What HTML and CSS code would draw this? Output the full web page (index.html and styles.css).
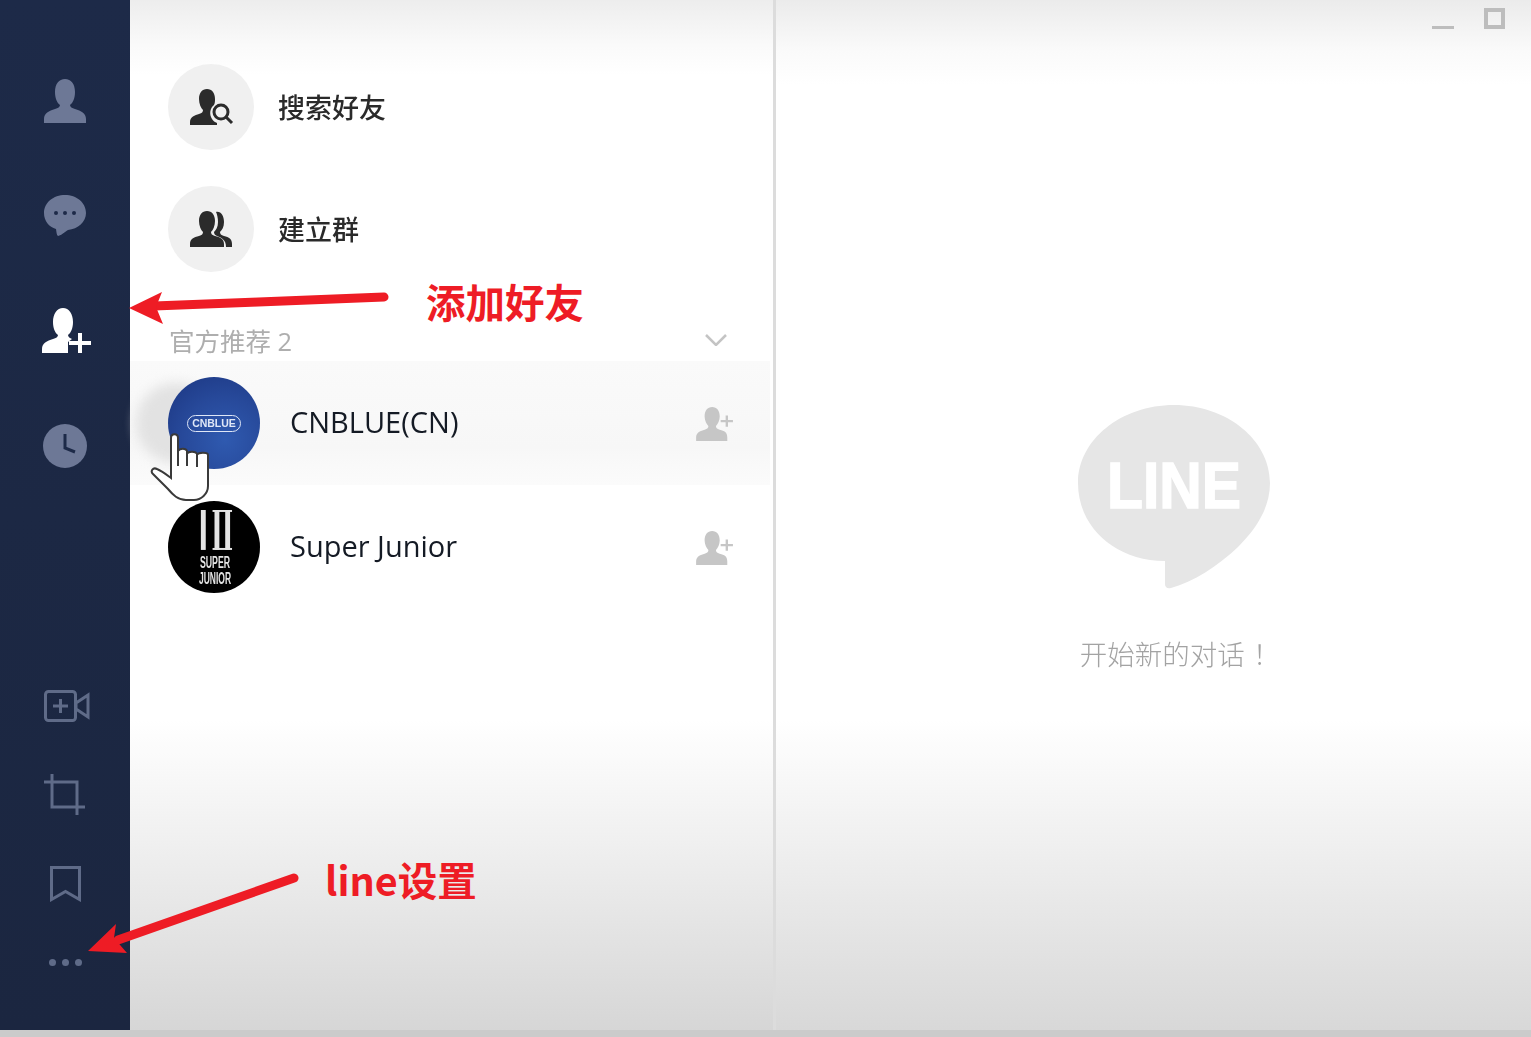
FILE: index.html
```html
<!DOCTYPE html>
<html lang="zh-CN">
<head>
<meta charset="utf-8">
<title>LINE</title>
<link rel="stylesheet" href="styles.css">
</head>
<body>
<svg class="defs" width="0" height="0" aria-hidden="true">
  <symbol id="person" viewBox="0 0 42 44">
    <path d="M0 44v-4c0-6 5-8 11-10 3-1 5-2 5-4-3-2-5-7-5-13C11 5 15 0 21 0s10 5 10 13c0 6-2 11-5 13 0 2 2 3 5 4 6 2 11 4 11 10v4z"/>
  </symbol>
</svg>
<div class="app">
  <nav class="sidebar">
    <div class="nav-top">
      <div class="nav-item"><svg class="ic-person"><use href="#person"/></svg></div>
      <div class="nav-item">
        <svg class="ic-chat" viewBox="0 0 42 42"><path d="M21 0C9.500 0 0 7.500 0 18c0 8 5 14 12 16 .5 3 .5 6 2 7 2 0 7-4 10-6 10-1 18-8 18-17C42 7.500 32.500 0 21 0z"/><circle cx="12" cy="18" r="2" class="dot"/><circle cx="21" cy="18" r="2" class="dot"/><circle cx="30" cy="18" r="2" class="dot"/></svg>
      </div>
      <div class="nav-item active">
        <svg class="ic-add" viewBox="0 0 50 46"><path d="M0 45v-4c0-6 5-8 11-10 3-1 5-2 5-4-3-2-5-7-5-13C11 6 15 0 21 0s10 6 10 14c0 6-2 11-5 13 0 2 2 3 4 4l-4 3v11z"/><path d="M27 35h22M38 25v20" class="plus"/></svg>
      </div>
      <div class="nav-item">
        <svg class="ic-clock" viewBox="0 0 44 44"><circle cx="22" cy="22" r="22"/><path d="M22 10v14l10 4" class="hand-line"/></svg>
      </div>
    </div>
    <div class="nav-bottom">
      <div class="nav-item small">
        <svg class="ic-outline ic-video" viewBox="0 0 46 32"><rect x="1.500" y="1.500" width="30" height="29" rx="3"/><path d="M9 16h15M16.500 9v14M32 13l12-8v22l-12-8z"/></svg>
      </div>
      <div class="nav-item small">
        <svg class="ic-outline ic-crop" viewBox="0 0 42 42"><path d="M8 0v33h33M0 8h33v33"/></svg>
      </div>
      <div class="nav-item small">
        <svg class="ic-outline ic-mark" viewBox="0 0 31 36"><path d="M1.500 1.500h28v32l-14-8-14 8z"/></svg>
      </div>
      <div class="nav-item tiny"><span class="dots"><i></i><i></i><i></i></span></div>
    </div>
  </nav>

  <section class="list">
    <div class="action">
      <span class="action-circle">
        <svg class="ic-search" viewBox="0 0 44 36"><path d="M0 36v-3c0-5 5-7 9-8 3-1 4-2 4-4-2-2-4-6-4-11C9 4 12 0 17 0s8 4 8 10c0 2 0 4-1 6-4 3-5 9-2 14 1 2 3 3 5 4v2z"/><circle cx="31" cy="23" r="7" class="lens"/><path d="M36 28l6 6" class="lens"/></svg>
      </span>
      <span class="action-label">搜索好友</span>
    </div>
    <div class="action">
      <span class="action-circle">
        <svg class="ic-group" viewBox="0 0 42 36"><path d="M26 1c5-1 8 4 8 10 0 5-2 8-4 10 0 2 1 3 4 4 5 1 8 3 8 8v3h-6c0-7-4-9-9-11-2-1-3-2-3-4 2-2 4-5 4-10 0-4-1-8-2-10z"/><path d="M0 36v-3c0-5 4-7 9-8 3-1 4-2 4-4-2-2-4-6-4-11C9 4 12 0 17 0s8 4 8 10c0 5-2 9-4 11 0 2 1 3 4 4 5 1 9 3 9 8v3z"/></svg>
      </span>
      <span class="action-label">建立群</span>
    </div>

    <div class="section-head">
      <span>官方推荐 2</span>
      <svg class="ic-chevron" viewBox="0 0 22 12"><path d="M1 1l10 10L21 1"/></svg>
    </div>

    <div class="row hover">
      <span class="ripple"></span>
      <span class="avatar avatar-blue"><span class="cn-pill">CNBLUE</span></span>
      <span class="row-name">CNBLUE(CN)</span>
      <svg class="ic-rowadd" viewBox="0 0 40 36"><path d="M0 36v-4c0-5 5-7 9-8 3-1 4-2 4-4-2-2-4-6-4-10C9 4 12 0 17 0s8 4 8 10c0 4-2 8-4 10 0 2 1 3 4 4 5 1 8 3 8 8v4z"/><path d="M26 15h13M32.500 9v12" class="plus"/></svg>
    </div>
    <div class="row">
      <span class="avatar avatar-black">
        <svg class="sj-logo" viewBox="0 0 40 76">
          <rect x="6" y="0" width="5" height="41"/><rect x="20" y="0" width="5" height="41"/><rect x="31" y="0" width="5" height="41"/><rect x="18" y="0" width="20" height="2"/><rect x="18" y="39" width="20" height="2"/>
          <text x="20.500" y="60" text-anchor="middle" textLength="31" lengthAdjust="spacingAndGlyphs">SUPER</text>
          <text x="20.500" y="76" text-anchor="middle" textLength="33" lengthAdjust="spacingAndGlyphs">JUNIOR</text>
        </svg>
      </span>
      <span class="row-name">Super Junior</span>
      <svg class="ic-rowadd" viewBox="0 0 40 36"><path d="M0 36v-4c0-5 5-7 9-8 3-1 4-2 4-4-2-2-4-6-4-10C9 4 12 0 17 0s8 4 8 10c0 4-2 8-4 10 0 2 1 3 4 4 5 1 8 3 8 8v4z"/><path d="M26 15h13M32.500 9v12" class="plus"/></svg>
    </div>
  </section>

  <main class="chat">
    <div class="win-controls">
      <span class="win-min"></span>
      <span class="win-max"></span>
    </div>
    <div class="empty">
      <svg class="line-logo" viewBox="0 0 192 184">
        <path d="M96 0c53 0 96 35 96 78 0 25-14 46-32 64-20 19-45 35-67 41-4 1-6-1-6-4v-23C37 156 0 122 0 78 0 35 43 0 96 0z"/>
        <text x="96" y="103" text-anchor="middle" textLength="134" lengthAdjust="spacingAndGlyphs">LINE</text>
      </svg>
      <p class="empty-text">开始新的对话<span class="bang">！</span></p>
    </div>
  </main>
</div>
<div class="strip"></div>

<svg class="hand" viewBox="0 0 60 72">
  <path d="M21 8c0-5 7-5 7 0v13c2-3 8-3 9 0v3c1-3 9-3 10 0v1c1-3 11-3 11 0v31c0 8-7 14-14 14H36c-8 0-13-5-18-11L3 44c-3-3 0-7 4-5 5 2 10 6 14 9zM37 24v12M47 25v12M28 21v15"/>
</svg>
<svg class="arrow arrow-one" viewBox="0 0 262 36">
  <path d="M255 6L25 15" class="shaft"/>
  <path d="M0 17L33 1l-6 15 7 17z" class="head"/>
</svg>
<svg class="arrow arrow-two" viewBox="0 0 214 84">
  <path d="M206 6L30 68" class="shaft"/>
  <path d="M0 79L28 52l-2 14 13 15z" class="head"/>
</svg>
<div class="note note-one">添加好友</div>
<div class="note note-two">line设置</div>
</body>
</html>
```

FILE: styles.css
```css
* { box-sizing: border-box; }
html, body { margin: 0; padding: 0; }
body {
  width: 1531px;
  height: 1037px;
  overflow: hidden;
  position: relative;
  background: #c8c8c8;
  font-family: "Open Sans", "Noto Sans CJK SC", sans-serif;
}
.defs { position: absolute; }
.app { display: flex; height: 1030px; filter: blur(.5px); }
.strip { height: 7px; background: #cbcbcb; }

/* sidebar */
.sidebar {
  width: 130px;
  flex: none;
  display: flex;
  flex-direction: column;
  justify-content: space-between;
  background: linear-gradient(#1d2a48, #1b2640);
  padding: 43px 0 33px;
  fill: #6d7896;
}
.nav-item { height: 115px; display: flex; align-items: center; justify-content: center; }
.nav-item.small { height: 89px; }
.nav-item.tiny { height: 69px; }
.nav-item.active { fill: #fff; }
.ic-person { width: 42px; height: 44px; }
.ic-chat { width: 42px; height: 42px; }
.ic-chat .dot { fill: #1d2a48; }
.ic-add { width: 50px; height: 46px; margin-left: 3px; }
.ic-add .plus { fill: none; stroke: #fff; stroke-width: 4; }
.ic-clock { width: 44px; height: 44px; }
.hand-line { fill: none; stroke: #1d2a48; stroke-width: 3; }
.ic-outline { fill: none; stroke: #5f6b88; stroke-width: 3; }
.ic-video { width: 46px; height: 32px; margin-left: 3px; }
.ic-crop { width: 42px; height: 42px; }
.ic-mark { width: 31px; height: 36px; }
.dots { display: flex; gap: 6px; }
.dots i { width: 7px; height: 7px; border-radius: 50%; background: #5f6b88; }

/* list panel */
.list {
  width: 643px;
  flex: none;
  padding: 46px 3px 0 0;
  background: linear-gradient(#ededed 0, #fafafa 45px, #fff 75px, #fff 720px, #f0f0f0 840px, #d6d6d6 1030px);
}
.action { height: 122px; padding-left: 38px; display: flex; align-items: center; gap: 24px; }
.action-circle {
  width: 86px;
  height: 86px;
  border-radius: 50%;
  background: #f0f0f0;
  display: flex;
  align-items: center;
  justify-content: center;
  fill: #2b2b2b;
}
.ic-search { width: 44px; height: 36px; margin-left: 2px; }
.ic-group { width: 42px; height: 36px; }
.lens { fill: none; stroke: #2b2b2b; stroke-width: 3; }
.action-label { font-size: 27px; font-weight: 500; color: #2a2a2a; margin-top: -2px; }
.section-head {
  height: 71px;
  padding: 28px 43px 0 39px;
  display: flex;
  align-items: center;
  justify-content: space-between;
  font-size: 25.500px;
  color: #aeaeae;
}
.ic-chevron { width: 22px; height: 12px; fill: none; stroke: #c4c4c4; stroke-width: 2.500; }
.row {
  height: 124px;
  padding: 0 35px 0 38px;
  display: flex;
  align-items: center;
  gap: 30px;
  position: relative;
}
.row.hover { background: linear-gradient(#fafafa, #f7f7f7 70%, #fbfbfb); }
.ripple {
  position: absolute;
  left: 6px;
  top: 22px;
  width: 80px;
  height: 80px;
  border-radius: 50%;
  background: #e2e2e2;
  filter: blur(6px);
}
.avatar {
  width: 92px;
  height: 92px;
  border-radius: 50%;
  flex: none;
  position: relative;
  display: flex;
  align-items: center;
  justify-content: center;
}
.avatar-blue { background: radial-gradient(circle at 62% 68%, #2f5ab0, #27499a 50%, #1b3580); }
.cn-pill {
  width: 54px;
  height: 17px;
  border: 1.500px solid #dfe7f7;
  border-radius: 9px;
  color: #dfe7f7;
  font: 700 10.500px/14px "Liberation Sans", sans-serif;
  text-align: center;
}
.avatar-black { background: #000; }
.sj-logo { width: 39px; height: 74px; fill: #e4e4e4; overflow: visible; margin-left: 1px; }
.sj-logo text { font: 700 16px "Liberation Sans", sans-serif; }
.row-name { flex: 1; font-size: 29px; color: #141a24; margin-top: -3px; }
.ic-rowadd { width: 40px; height: 34px; fill: #c6c6c6; margin-top: 2px; }
.ic-rowadd .plus { fill: none; stroke: #c6c6c6; stroke-width: 2.500; }

/* right panel */
.chat {
  flex: 1;
  border-left: 3px solid #dcdcdc;
  display: flex;
  flex-direction: column;
  background: linear-gradient(#ebebeb 0, #fafafa 50px, #fff 85px, #fff 720px, #f0f0f0 840px, #d8d8d8 1030px);
}
.win-controls { display: flex; justify-content: flex-end; align-items: flex-end; gap: 30px; padding: 9px 26px 0 0; height: 29px; }
.win-min { width: 22px; height: 3px; background: #bdbdbd; }
.win-max { width: 21px; height: 21px; border: 4px solid #bdbdbd; }
.empty { display: flex; flex-direction: column; align-items: center; padding: 376px 0 0 0; margin-left: 41px; }
.line-logo { width: 192px; height: 184px; fill: #e6e6e6; }
.line-logo text { fill: #fff; stroke: #fff; stroke-width: 1.500; font: 700 64px "Liberation Sans", sans-serif; }
.empty-text { margin: 46px 0 0 12px; font-size: 27.500px; line-height: 40px; color: #a3a3a3; font-weight: 300; }
.bang { margin-left: 8px; }

/* overlays */
.hand {
  position: absolute;
  left: 150px;
  top: 430px;
  width: 60px;
  height: 72px;
  fill: #fff;
  stroke: #3a3a3a;
  stroke-width: 2;
  filter: blur(.4px);
}
.arrow { position: absolute; filter: blur(.4px); }
.arrow-one { left: 129px; top: 291px; width: 262px; height: 36px; }
.arrow-two { left: 88px; top: 872px; width: 214px; height: 84px; }
.shaft { fill: none; stroke: #ee1c25; stroke-width: 9; stroke-linecap: round; }
.head { fill: #ee1c25; }
.note {
  position: absolute;
  color: #ee1c25;
  font-family: "Noto Sans CJK SC", sans-serif;
  font-weight: 700;
  font-size: 39.500px;
  line-height: 50px;
}
.note-one { left: 426px; top: 276px; }
.note-two { left: 325px; top: 854px; }
```
